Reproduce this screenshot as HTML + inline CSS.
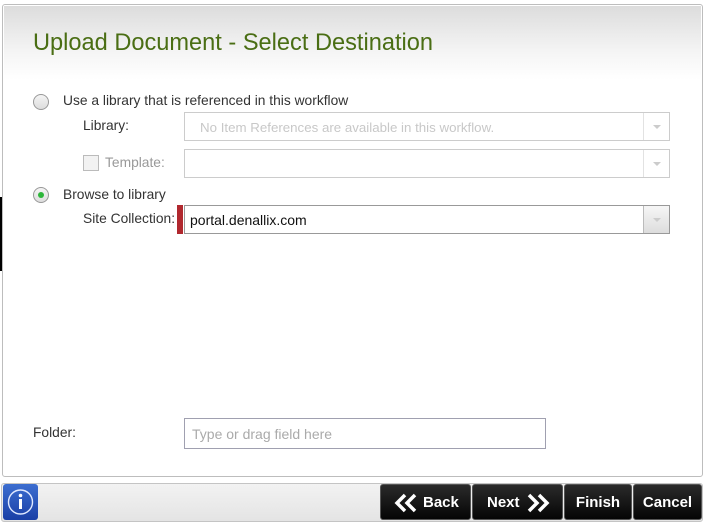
<!DOCTYPE html>
<html><head><meta charset="utf-8"><style>
*{box-sizing:border-box;margin:0;padding:0}
body{width:704px;height:523px;background:#fff;font-family:"Liberation Sans",Arial,sans-serif;position:relative;overflow:hidden}
.panel{position:absolute;left:2px;top:4px;width:701px;height:473px;border:1px solid #bdbdbd;border-radius:3px;background:#fff}
.hdr{position:absolute;left:1px;top:1px;right:1px;height:74px;background:linear-gradient(#dcdcdc,#f4f4f4 60%,#fff)}
.hdr h1{position:absolute;left:29px;top:24px;font-weight:normal;font-size:23.6px;color:#4a6e14}
.t{position:absolute;font-size:13.8px;color:#333}
.radio{position:absolute;width:16px;height:16px;border-radius:50%;border:1px solid #999;background:linear-gradient(#f4f4f4,#ddd)}
.dot{position:absolute;left:4px;top:4px;width:6px;height:6px;border-radius:50%;background:#2db63a}
.sel{position:absolute;border:1px solid #ccc;background:#fff;font-size:13.3px}
.sel .ar{position:absolute;right:0;top:0;bottom:0;width:26px;border-left:1px solid #e2e2e2}
.sel .ar:after{content:"";position:absolute;left:9px;top:12px;border-left:4px solid transparent;border-right:4px solid transparent;border-top:4px solid #ccc}
.foot{position:absolute;left:1px;top:483px;width:702px;height:39px;border:1px solid #c4c4c4;border-radius:3px;background:linear-gradient(#f2f2f2,#e4e4e4)}
.btn{position:absolute;top:484px;height:36px;background:linear-gradient(#2a2a2a,#050505);border:1px solid #555;border-radius:3px;color:#fff;font-weight:bold;font-size:15px;text-align:center;line-height:36px}
</style></head><body>
<div style="position:absolute;left:0;top:197px;width:2px;height:74px;background:#000"></div>
<div class="panel"><div class="hdr"><h1>Upload Document - Select Destination</h1></div></div>

<div class="radio" style="left:33px;top:94px"></div>
<div class="t" style="left:63px;top:93px">Use a library that is referenced in this workflow</div>
<div class="t" style="left:83px;top:118px">Library:</div>
<div class="sel" style="left:184px;top:112px;width:486px;height:29px"><span style="position:absolute;left:15px;top:7px;color:#c8c8c8">No Item References are available in this workflow.</span><div class="ar"></div></div>
<div style="position:absolute;left:83px;top:155px;width:16px;height:16px;border:1px solid #bbb;background:#f2f2f2"></div>
<div class="t" style="left:105px;top:155px;color:#999">Template:</div>
<div class="sel" style="left:184px;top:149px;width:486px;height:29px"><div class="ar"></div></div>

<div class="radio" style="left:33px;top:187px"><div class="dot"></div></div>
<div class="t" style="left:63px;top:187px">Browse to library</div>
<div class="t" style="left:83px;top:211px">Site Collection:</div>
<div style="position:absolute;left:177px;top:205px;width:6px;height:29px;background:#b0282e"></div>
<div class="sel" style="left:184px;top:205px;width:486px;height:29px;border-color:#999"><span style="position:absolute;left:5px;top:6px;color:#111;font-size:14px">portal.denallix.com</span><div class="ar" style="background:linear-gradient(#f6f6f6,#ddd);border-left-color:#bbb"></div></div>

<div class="t" style="left:33px;top:425px">Folder:</div>
<div style="position:absolute;left:184px;top:418px;width:362px;height:31px;border:1px solid #a0a0b0;background:#fff"><span style="position:absolute;left:7px;top:7px;color:#aaa;font-size:14px">Type or drag field here</span></div>

<div class="foot"></div>
<div style="position:absolute;left:3px;top:484px;width:35px;height:36px;border-radius:3px;background:linear-gradient(#3c6ed0,#1a3fa6)"><svg width="35" height="36"><circle cx="17.5" cy="18" r="12" fill="none" stroke="#dfe8ff" stroke-width="1.4"/><circle cx="17.5" cy="11.5" r="1.8" fill="#fff"/><rect x="16" y="15" width="3" height="10" fill="#fff"/></svg></div>
<div class="btn" style="left:380px;width:91px"><svg width="26" height="20" style="position:absolute;left:12px;top:8px"><path d="M12 2L4 10L12 18M22 2L14 10L22 18" fill="none" stroke="#fff" stroke-width="3.5"/></svg><span style="position:absolute;left:42px">Back</span></div>
<div class="btn" style="left:472px;width:91px"><span style="position:absolute;left:14px">Next</span><svg width="26" height="20" style="position:absolute;left:52px;top:8px"><path d="M4 2L12 10L4 18M14 2L22 10L14 18" fill="none" stroke="#fff" stroke-width="3.5"/></svg></div>
<div class="btn" style="left:564px;width:68px">Finish</div>
<div class="btn" style="left:633px;width:69px">Cancel</div>
</body></html>
